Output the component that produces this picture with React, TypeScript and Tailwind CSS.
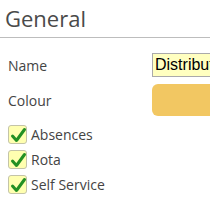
import React from 'react';

const Check: React.FC = () => (
    <span className="relative flex h-[19px] w-[19px] items-center justify-center rounded-[3px] border border-[#c4c4a8] bg-[#ffffb0]">
        <svg className="absolute left-0 top-0" width="19" height="19" viewBox="0 0 19 19">
            <path d="M3.5 10 L7.5 14.5 L15.5 3.5" fill="none" stroke="#239023" strokeWidth="3" strokeLinecap="round" strokeLinejoin="round" />
        </svg>
    </span>
);

const App: React.FC = () => {
    const options = ['Absences', 'Rota', 'Self Service'];

    return (
        <div className="h-[210px] w-[210px] overflow-hidden bg-white" style={{ fontFamily: '"Open Sans", sans-serif' }}>
            <div className="border-b border-[#bdbdbd] pl-[5px] pt-[3px] pb-[3px]">
                <h2 className="text-[22px] leading-[31px] text-[#4a4a4a]">General</h2>
            </div>

            <div className="pl-[8px] pt-[15px]">
                <div className="flex h-[24px] items-center">
                    <span className="w-[144px] shrink-0 text-[14px] text-[#444]">Name</span>
                    <div className="h-[24px] w-[120px] shrink-0 border border-[#aaa] bg-[#ffffc0] pl-[2px] text-[16px] leading-[22px] text-black" style={{ fontFamily: '"Liberation Sans", Arial, sans-serif' }}>
                        Distribution
                    </div>
                </div>
                <div className="mt-[7px] flex h-[32px] items-center">
                    <span className="w-[144px] shrink-0 text-[14px] text-[#444]">Colour</span>
                    <div className="h-[32px] w-[120px] shrink-0 rounded-[6px] bg-[#f2c762]" />
                </div>

                <div className="mt-[9px] flex flex-col gap-[6px]">
                    {options.map((o) => (
                        <div key={o} className="flex h-[19px] items-center gap-[4px]">
                            <Check />
                            <span className="text-[14px] text-[#444]">{o}</span>
                        </div>
                    ))}
                </div>
            </div>
        </div>
    );
};

export default App;
